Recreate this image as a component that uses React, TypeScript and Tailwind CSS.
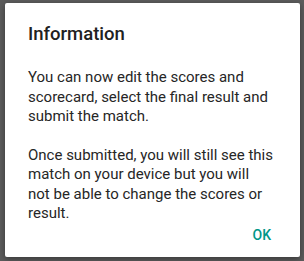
import React from "react";

export default function App() {
  return (
    <div
      className="w-[304px] h-[261px] bg-[#5c5c5c] overflow-hidden pt-[3px] pl-[5px]"
      style={{ fontFamily: "Roboto, 'Liberation Sans', sans-serif" }}
    >
      <div className="w-[295px] h-[254px] bg-white rounded-[2px] shadow-[0_2px_6px_rgba(0,0,0,0.4)] flex flex-col pl-[23px] pr-[26px] pt-[19px]">
        <div className="text-[18.5px] leading-[24px] font-medium text-[#212121]">Information</div>
        <div className="mt-[22px] text-[15px] leading-[19.5px] text-[#262626]">
          <p>You can now edit the scores and scorecard, select the final result and submit the match.</p>
          <p className="mt-[19px]">
            Once submitted, you will still see this match on your device but you will not be able to change the scores or result.
          </p>
        </div>
        <div className="flex justify-end mt-[3px] pr-[3px]">
          <span className="text-[14px] leading-[16px] font-medium text-[#009688]">OK</span>
        </div>
      </div>
    </div>
  );
}
